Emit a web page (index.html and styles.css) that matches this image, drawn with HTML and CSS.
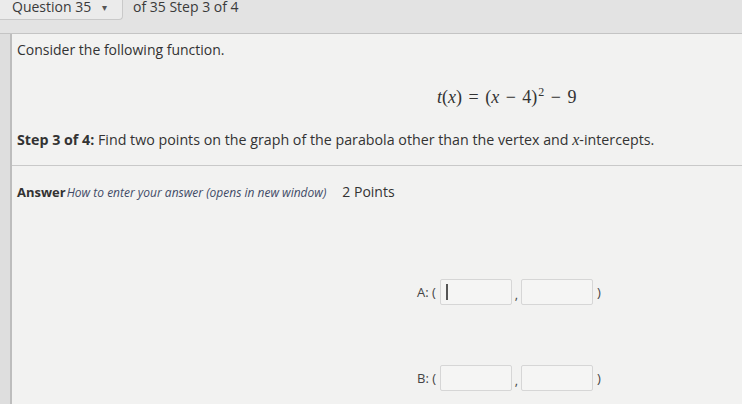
FILE: index.html
```html
<!DOCTYPE html>
<html>
<head>
<meta charset="utf-8">
<link rel="stylesheet" href="styles.css">
</head>
<body>
<div class="topbar">
  <div class="qbtn">Question 35 <span class="caret">&#9662;</span></div>
  <div class="steptext">of 35 Step 3 of 4</div>
</div>
<div class="panel">
  <div class="intro">Consider the following function.</div>
  <div class="formula"><i>t</i>(<i>x</i>) <span class="op">=</span> (<i>x</i> <span class="op">&minus;</span> 4)<sup>2</sup> <span class="op">&minus;</span> 9</div>
  <div class="step"><b>Step 3 of 4:</b> Find two points on the graph of the parabola other than the vertex and <i class="mathx">x</i>-intercepts.</div>
  <div class="answer">
    <div class="answer-head"><b class="ans">Answer</b><a class="howto">How to enter your answer (opens in new window)</a><span class="points">2 Points</span></div>
    <div class="points-form">
      <div class="pt-row"><span class="lbl">A: (</span><span class="box"><span class="cursor"></span></span><span class="comma">,</span><span class="box"></span><span class="paren">)</span></div>
      <div class="pt-row"><span class="lbl">B: (</span><span class="box"></span><span class="comma">,</span><span class="box"></span><span class="paren">)</span></div>
    </div>
  </div>
</div>
</body>
</html>
```
FILE: styles.css
```css
html, body {
  margin: 0;
  padding: 0;
}
body {
  width: 742px;
  height: 404px;
  overflow: hidden;
  background: #dedede;
  font-family: "Open Sans", "Liberation Sans", sans-serif;
  color: #333;
}
.topbar {
  height: 33px;
  display: flex;
  align-items: flex-start;
  background: #e3e3e3;
  border-bottom: 1px solid #c4c4c4;
}
.qbtn {
  width: 110px;
  height: 22px;
  margin-top: -3px;
  padding: 0 0 0 12px;
  background: #ebebeb;
  border: 1px solid #c9c9c9;
  border-top: none;
  border-left: none;
  border-radius: 0 0 4px 0;
  font-size: 14px;
  line-height: 20px;
  color: #3a3a3a;
  box-sizing: content-box;
}
.caret {
  font-size: 10px;
  margin-left: 7px;
  color: #555;
  vertical-align: 1px;
}
.steptext {
  margin-left: 10px;
  margin-top: -3px;
  font-size: 14px;
  line-height: 20px;
  color: #3a3a3a;
}
.panel {
  margin-left: 10px;
  height: 370px;
  background: #f2f2f1;
  border-left: 2px solid #bdbdbd;
  padding-left: 5px;
}
.intro {
  padding-top: 5px;
  font-size: 14px;
  line-height: 22px;
}
.formula {
  margin-top: 25px;
  padding-left: 420px;
  font-family: "Liberation Serif", "DejaVu Serif", serif;
  font-size: 18px;
  line-height: 22px;
  color: #333;
}
.formula .op {
  margin: 0 2px;
}
.formula sup {
  font-size: 12px;
  vertical-align: 7px;
  line-height: 0;
  margin-left: 1px;
}
.step {
  margin-top: 21px;
  font-size: 14.25px;
  line-height: 22px;
  padding-bottom: 14px;
  border-bottom: 1px solid #c9c9c9;
  margin-left: -5px;
  padding-left: 5px;
}
.step b {
  font-weight: 700;
}
.mathx {
  font-family: "Liberation Serif", serif;
  font-size: 16px;
}
.answer-head {
  margin-top: 15px;
  display: flex;
  align-items: baseline;
  font-size: 14px;
  line-height: 22px;
}
.ans {
  font-weight: 700;
  font-size: 13px;
}
.howto {
  font-style: italic;
  font-size: 12px;
  color: #3f4a66;
  margin-left: 1px;
}
.points {
  margin-left: 16px;
}
.points-form {
  padding-left: 400px;
  padding-top: 75px;
  display: flex;
  flex-direction: column;
  gap: 60px;
}
.pt-row {
  display: flex;
  align-items: center;
  height: 26px;
  font-size: 13px;
  color: #444;
}
.lbl {
  width: 23px;
}
.box {
  width: 70px;
  height: 24px;
  border: 1px solid #d6d6d6;
  border-radius: 2px;
  background: #f5f5f4;
  position: relative;
}
.cursor {
  position: absolute;
  left: 5px;
  top: 4px;
  width: 1.5px;
  height: 16px;
  background: #555;
}
.comma {
  width: 9px;
  text-align: center;
  padding-top: 4px;
}
.paren {
  margin-left: 4px;
}
```
